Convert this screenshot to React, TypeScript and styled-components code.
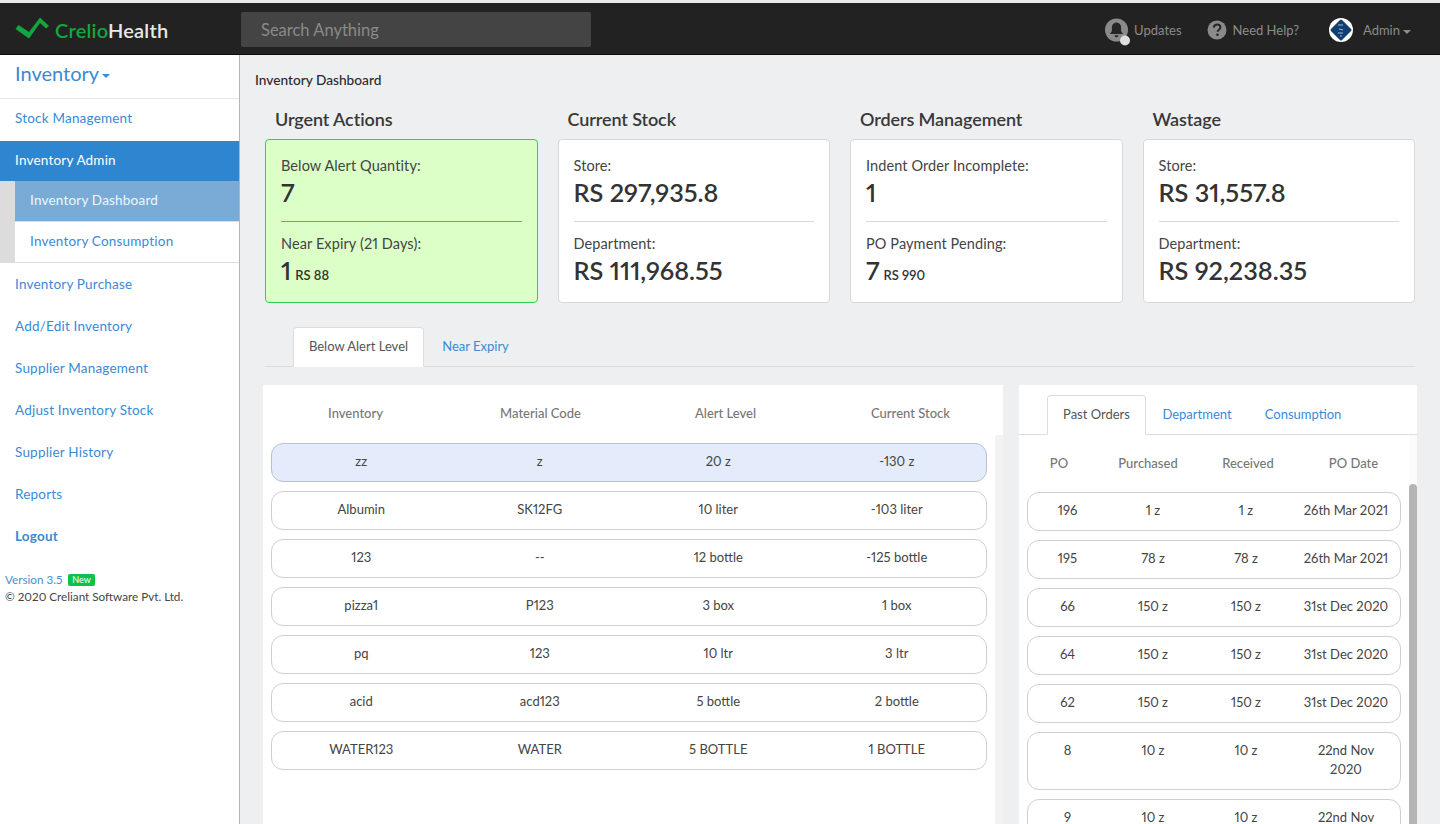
import React from "react";
import styled, { createGlobalStyle } from "styled-components";

const Global = createGlobalStyle`
  html, body { margin: 0; padding: 0; height: 100%; overflow: hidden; background: #eeeff1; }
  * { box-sizing: border-box; }
  body { font-family: Lato, "Open Sans", "Liberation Sans", sans-serif; color: #333; font-variant-numeric: proportional-nums; }
`;

const Page = styled.div`
  width: 1440px; height: 824px; display: flex; flex-direction: column; overflow: hidden;
  border-top: 3px solid #e9e9e9;
`;
const TopBar = styled.header`
  height: 52px; flex: none; background: #222; border-bottom: 1px solid #0e0e0e;
  display: flex; align-items: center;
`;
const LogoBox = styled.div`
  width: 241px; flex: none; padding-left: 15px; display: flex; align-items: center; gap: 5px;
`;
const LogoText = styled.span`
  font-size: 20px; font-weight: 600; color: #e8e8e8; letter-spacing: 0.2px; margin-top: 3px;
  b { color: #10a83e; font-weight: 600; }
`;
const Search = styled.div`
  width: 350px; height: 35px; background: #444; border-radius: 2px; color: #8a8a8a;
  font-size: 16.5px; display: flex; align-items: center; padding: 2px 0 0 20px; margin-top: 1px;
`;
const TopRight = styled.div`
  margin-left: auto; margin-top: 3px; display: flex; align-items: center; color: #8c8c8c; font-size: 13px; padding-right: 29px;
`;
const TopLink = styled.div<{ $gap: number; $ml: number }>`
  display: flex; align-items: center; gap: ${(p) => p.$gap}px; margin-left: ${(p) => p.$ml}px;
`;
const Caret = styled.span<{ $c: string; $s: number }>`
  display: inline-block; width: 0; height: 0; margin-left: 3px; vertical-align: middle;
  border-left: ${(p) => p.$s}px solid transparent; border-right: ${(p) => p.$s}px solid transparent;
  border-top: ${(p) => p.$s}px solid ${(p) => p.$c};
`;
const Body = styled.div`flex: 1; display: flex; min-height: 0;`;
const Side = styled.nav`
  width: 240px; flex: none; background: #fff; border-right: 1px solid #b5b5b5; height: 100%;
`;
const SideTitle = styled.div`
  height: 44px; border-bottom: 1px solid #e6e6e6; padding: 6px 0 0 15px; font-size: 20px; color: #3a8ad6; line-height: 24px;
`;
const SideItem = styled.div<{ $active?: boolean; $bold?: boolean }>`
  height: ${(p) => (p.$active ? 40 : 42)}px; display: flex; align-items: center; padding-left: 15px; font-size: 13.5px;
  letter-spacing: 0.2px; padding-bottom: ${(p) => (p.$active ? 2 : 0)}px;
  background: ${(p) => (p.$active ? "#2f86d0" : "transparent")};
  color: ${(p) => (p.$active ? "#fff" : "#3a8ad6")};
  font-weight: ${(p) => (p.$bold ? 700 : 400)};
`;
const FirstItem = styled(SideItem)`height: 40px; margin-bottom: 2px; padding-bottom: 2px;`;
const SubGroup = styled.div`
  border-left: 15px solid #dcdcdc; border-bottom: 1px solid #dcdcdc;
`;
const SubItem = styled.div<{ $active?: boolean }>`
  height: ${(p) => (p.$active ? 41 : 40)}px; display: flex; align-items: center; padding: 0 0 2px 15px; font-size: 13.5px;
  letter-spacing: 0.2px;
  background: ${(p) => (p.$active ? "#7aabd6" : "#fff")};
  color: ${(p) => (p.$active ? "#f2f6fa" : "#3a8ad6")};
  border-bottom: ${(p) => (p.$active ? "1px solid #dcdcdc" : "none")};
`;
const Version = styled.div`
  padding: 14px 0 0 5px; font-size: 11.7px; line-height: 17px; color: #444;
`;
const VersionLine = styled.div`color: #4a90d6; display: flex; align-items: center; gap: 5px;`;
const NewTag = styled.span`
  background: #0cc24a; color: #fff; font-size: 9px; line-height: 12px; padding: 0 4px; border-radius: 2px; margin-left: 1px;
`;
const Main = styled.main`flex: 1; min-width: 0; background: #eeeff1; position: relative; overflow: hidden;`;
const Crumb = styled.div`
  font-size: 13.7px; font-weight: 500; color: #2a2a2a; padding: 16px 0 0 15px; line-height: 18px;
`;
const Cards = styled.div`
  display: grid; grid-template-columns: repeat(4, 272.5px); column-gap: 20px; margin: 19px 0 0 25px;
`;
const CardCol = styled.section``;
const CardTitle = styled.h2`
  margin: 0 0 9px 10px; font-size: 18px; line-height: 22px; font-weight: 600; color: #383838; letter-spacing: -0.1px;
`;
const Card = styled.div<{ $green?: boolean }>`
  height: 164px; border-radius: 4px; padding: 16px 15px 0;
  background: ${(p) => (p.$green ? "#dcffc8" : "#fff")};
  border: 1px solid ${(p) => (p.$green ? "#2fd05a" : "#d8d8d8")};
`;
const Label = styled.div`font-size: 14.5px; line-height: 20px; color: #444; letter-spacing: 0.1px;`;
const Value = styled.div`
  font-size: 25.3px; line-height: 36px; margin-top: -2px; font-weight: 600; color: #333; white-space: nowrap;
  small { font-size: 13px; font-weight: 600; margin-left: 4px; }
`;
const Split = styled.hr<{ $green?: boolean }>`
  border: 0; height: 1px; margin: 11px 0 12px;
  background: ${(p) => (p.$green ? "#2fd05a" : "#d8d8d8")};
`;
const TabBar = styled.div<{ $pad: number }>`
  display: flex; align-items: flex-end; padding-left: ${(p) => p.$pad}px; border-bottom: 1px solid #dcdcdc;
`;
const OuterTabs = styled(TabBar)`margin: 24px 0 0 25px; width: 1150px; height: 40px;`;
const InnerTabs = styled(TabBar)`height: 50px; background: #fff;`;
const Tab = styled.div<{ $active?: boolean; $w: number }>`
  width: ${(p) => p.$w}px; height: 40px; display: flex; align-items: center; justify-content: center; font-size: 13px;
  margin-bottom: -1px; border-radius: 4px 4px 0 0; padding-bottom: 2px;
  color: ${(p) => (p.$active ? "#555" : "#3a8ad6")};
  background: ${(p) => (p.$active ? "#fff" : "transparent")};
  border: 1px solid ${(p) => (p.$active ? "#dcdcdc" : "transparent")};
  border-bottom-color: ${(p) => (p.$active ? "#fff" : "transparent")};
`;
const Lower = styled.div`
  display: grid; grid-template-columns: 740px 398px; column-gap: 16px; margin: 18px 0 0 23px;
`;
const Panel = styled.section`background: #fff; height: 460px; position: relative; overflow: hidden;`;
const HeadRow = styled.div<{ $cols: string; $h: number; $pl?: number; $pb?: number }>`
  display: grid; grid-template-columns: ${(p) => p.$cols}; height: ${(p) => p.$h}px; align-items: center;
  padding-left: ${(p) => p.$pl ?? 0}px; padding-bottom: ${(p) => p.$pb ?? 0}px;
  text-align: center; color: #777; font-size: 13px; font-weight: 500;
`;
const Rows = styled.div<{ $pad: string }>`
  display: flex; flex-direction: column; gap: 9px; padding: ${(p) => p.$pad};
`;
const Row = styled.div<{ $cols: string; $sel?: boolean }>`
  display: grid; grid-template-columns: ${(p) => p.$cols}; min-height: 39px; padding: 8px 0 10px; align-items: start;
  text-align: center; font-size: 13px; line-height: 19px; color: #444; border-radius: 12px;
  background: ${(p) => (p.$sel ? "#e4ebfb" : "#fff")};
  border: 1px solid ${(p) => (p.$sel ? "#b9c0d4" : "#cfcfcf")};
`;
const DateCell = styled.div`padding: 0 10px 0 9px;`;
const Track = styled.div<{ $top: number; $c: string }>`
  position: absolute; right: 0; top: ${(p) => p.$top}px; bottom: 0; width: 8px; background: ${(p) => p.$c};
`;
const Thumb = styled.div`position: absolute; right: 0; top: 49px; bottom: 0; width: 8px; background: #b4b4b4; border-radius: 4px 4px 0 0;`;

const leftCols = "repeat(4, 1fr)";
const rightHead = "62px 116px 84px 127px";
const rightRow = "79px 92px 94px 1fr";

const inventory = [
  ["zz", "z", "20 z", "-130 z"],
  ["Albumin", "SK12FG", "10 liter", "-103 liter"],
  ["123", "--", "12 bottle", "-125 bottle"],
  ["pizza1", "P123", "3 box", "1 box"],
  ["pq", "123", "10 ltr", "3 ltr"],
  ["acid", "acd123", "5 bottle", "2 bottle"],
  ["WATER123", "WATER", "5 BOTTLE", "1 BOTTLE"],
];
const orders = [
  ["196", "1 z", "1 z", "26th Mar 2021"],
  ["195", "78 z", "78 z", "26th Mar 2021"],
  ["66", "150 z", "150 z", "31st Dec 2020"],
  ["64", "150 z", "150 z", "31st Dec 2020"],
  ["62", "150 z", "150 z", "31st Dec 2020"],
  ["8", "10 z", "10 z", "22nd Nov 2020"],
  ["9", "10 z", "10 z", "22nd Nov 2020"],
];
const navAfter = ["Inventory Purchase", "Add/Edit Inventory", "Supplier Management", "Adjust Inventory Stock", "Supplier History", "Reports"];

const cards = [
  { t: "Urgent Actions", g: true, a: "Below Alert Quantity:", b: "7", c: "Near Expiry (21 Days):", d: "1", s: "RS 88" },
  { t: "Current Stock", a: "Store:", b: "RS 297,935.8", c: "Department:", d: "RS 111,968.55" },
  { t: "Orders Management", a: "Indent Order Incomplete:", b: "1", c: "PO Payment Pending:", d: "7", s: "RS 990" },
  { t: "Wastage", a: "Store:", b: "RS 31,557.8", c: "Department:", d: "RS 92,238.35" },
];

const LogoMark = () => (
  <svg width="35" height="23" viewBox="0 0 35 23">
    <path d="M0.500 12 L3.500 8 L14 15 L25 0.500 L34 9 L31 11.500 L25 6 L14 21.500 Z" fill="#10a83e" />
  </svg>
);
const Bell = () => (
  <svg width="25" height="31" viewBox="0 0 25 31" overflow="visible">
    <circle cx="11.500" cy="15" r="11.500" fill="#8a8a8a" />
    <path d="M11.500 7.500c-3 0-4.600 2.200-4.600 5V16L5 19h13l-1.900-3v-3.500c0-2.800-1.600-5-4.600-5z" fill="#262626" />
    <path d="M9.500 20.200h4a2 2 0 0 1-4 0z" fill="#262626" />
    <circle cx="20" cy="25.500" r="5" fill="#dedede" />
  </svg>
);
const Help = () => (
  <svg width="20" height="20" viewBox="0 0 20 20">
    <circle cx="10" cy="10" r="9.500" fill="#8a8a8a" />
    <path d="M6.800 7.600c.2-1.900 1.500-3 3.400-3 1.900 0 3.200 1.100 3.200 2.700 0 2.300-2.800 2.400-2.800 4.500" fill="none" stroke="#262626" strokeWidth="2" />
    <circle cx="10.500" cy="14.800" r="1.300" fill="#262626" />
  </svg>
);
const Avatar = () => (
  <svg width="24" height="24" viewBox="0 0 24 24">
    <circle cx="12" cy="12" r="12" fill="#fff" />
    <path d="M12 3 L21 12 L12 21 L3 12 Z" fill="#123f73" stroke="#123f73" strokeWidth="3" strokeLinejoin="round" />
    <path d="M9 7h5M10 11l4 1M9 15h5M11 18h2" stroke="#9db8d4" strokeWidth="1" fill="none" />
  </svg>
);

export default function App() {
  return (
    <Page>
      <Global />
      <TopBar>
        <LogoBox>
          <LogoMark />
          <LogoText><b>Crelio</b>Health</LogoText>
        </LogoBox>
        <Search>Search Anything</Search>
        <TopRight>
          <TopLink $gap={4} $ml={0}><Bell />Updates</TopLink>
          <TopLink $gap={6} $ml={25}><Help />Need Help?</TopLink>
          <TopLink $gap={10} $ml={30}><Avatar /><span>Admin<Caret $c="#8c8c8c" $s={4} /></span></TopLink>
        </TopRight>
      </TopBar>
      <Body>
        <Side>
          <SideTitle>Inventory<Caret $c="#3a8ad6" $s={4} /></SideTitle>
          <FirstItem>Stock Management</FirstItem>
          <SideItem $active>Inventory Admin</SideItem>
          <SubGroup>
            <SubItem $active>Inventory Dashboard</SubItem>
            <SubItem>Inventory Consumption</SubItem>
          </SubGroup>
          {navAfter.map((n) => <SideItem key={n}>{n}</SideItem>)}
          <SideItem $bold>Logout</SideItem>
          <Version>
            <VersionLine>Version 3.5 <NewTag>New</NewTag></VersionLine>
            <div>© 2020 Creliant Software Pvt. Ltd.</div>
          </Version>
        </Side>
        <Main>
          <Crumb>Inventory Dashboard</Crumb>
          <Cards>
            {cards.map((c) => (
              <CardCol key={c.t}>
                <CardTitle>{c.t}</CardTitle>
                <Card $green={c.g}>
                  <Label>{c.a}</Label>
                  <Value>{c.b}</Value>
                  <Split $green={c.g} />
                  <Label>{c.c}</Label>
                  <Value>{c.d}{c.s && <small>{c.s}</small>}</Value>
                </Card>
              </CardCol>
            ))}
          </Cards>
          <OuterTabs $pad={28}>
            <Tab $active $w={131}>Below Alert Level</Tab>
            <Tab $w={103}>Near Expiry</Tab>
          </OuterTabs>
          <Lower>
            <Panel>
              <HeadRow $cols={leftCols} $h={58} $pb={2}>
                <div>Inventory</div><div>Material Code</div><div>Alert Level</div><div>Current Stock</div>
              </HeadRow>
              <Rows $pad="0 16px 0 8px">
                {inventory.map((r, i) => (
                  <Row key={r[0]} $cols={leftCols} $sel={i === 0}>
                    {r.map((v, j) => <div key={j}>{v}</div>)}
                  </Row>
                ))}
              </Rows>
              <Track $top={50} $c="#f3f3f3" />
            </Panel>
            <Panel>
              <InnerTabs $pad={28}>
                <Tab $active $w={99}>Past Orders</Tab>
                <Tab $w={102}>Department</Tab>
                <Tab $w={110}>Consumption</Tab>
              </InnerTabs>
              <HeadRow $cols={rightHead} $h={57} $pl={9} $pb={2}>
                <div>PO</div><div>Purchased</div><div>Received</div><div>PO Date</div>
              </HeadRow>
              <Rows $pad="0 16px 0 8px">
                {orders.map((r) => (
                  <Row key={r[0]} $cols={rightRow}>
                    <div>{r[0]}</div><div>{r[1]}</div><div>{r[2]}</div>
                    <DateCell>{r[3]}</DateCell>
                  </Row>
                ))}
              </Rows>
              <Track $top={50} $c="#fbfbfb"><Thumb /></Track>
            </Panel>
          </Lower>
        </Main>
      </Body>
    </Page>
  );
}
